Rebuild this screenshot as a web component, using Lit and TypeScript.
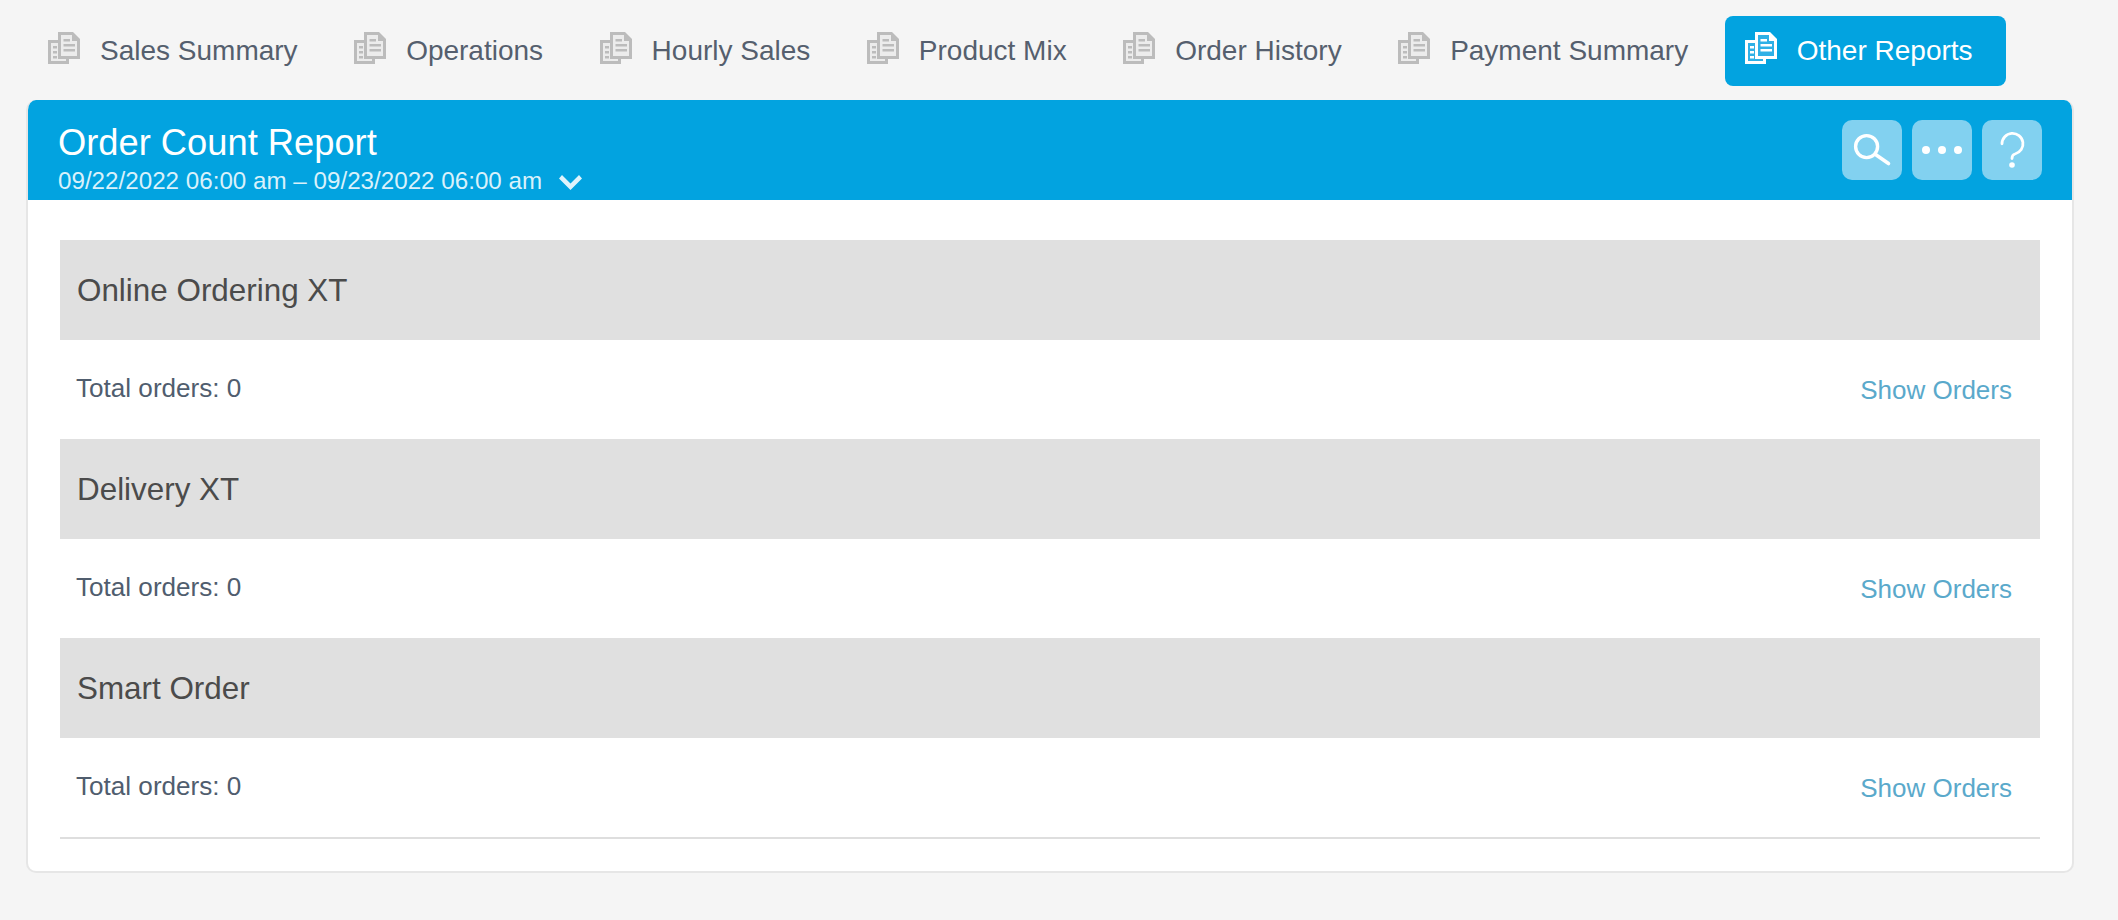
import { LitElement, html, css, svg } from "lit";
import { customElement } from "lit/decorators.js";

const tabs = ["Sales Summary", "Operations", "Hourly Sales", "Product Mix", "Order History", "Payment Summary", "Other Reports"];
const sections = ["Online Ordering XT", "Delivery XT", "Smart Order"];

const docIcon = html`<svg class="doc" viewBox="0 0 32 32" width="32" height="32" aria-hidden="true">
  ${svg`<path class="o" d="M0 8H21V32H0Z"/>
  <path class="i" d="M3 11H18V29H3Z"/>
  <path class="o" d="M5 14H9V16.5H5ZM5 19H9V21.5H5ZM5 24H9V26.5H5Z"/>
  <path class="o" d="M10 0H25L32 7V27H10Z"/>
  <path class="i" d="M13 3H24V9H29V24H13Z"/>
  <path class="o" d="M15.5 7H22V9.5H15.5ZM15.5 12H27V14.5H15.5ZM15.5 17H27V19.5H15.5Z"/>`}
</svg>`;

@customElement("app-root")
export class AppRoot extends LitElement {
  static styles = css`
    :host { display: block; min-height: 920px; background: #f5f5f5; font-family: "Liberation Sans", Arial, sans-serif; box-sizing: border-box; padding: 16px 44px 0 26px; }
    .tabs { display: flex; gap: 3.5px; height: 70px; padding-left: 2px; margin-bottom: 14px; }
    .tab { display: flex; align-items: center; gap: 20px; padding: 0 33px 0 20px; font-size: 28px; color: #555f6e; border-radius: 8px; --o: #bcbcbc; --i: #ececec; }
    .tab.active { background: #02a3e0; color: #fff; --o: #fff; --i: #2fb0e6; }
    .doc { flex: none; margin-top: -6px; filter: blur(0.4px); }
    .doc .o { fill: var(--o); }
    .doc .i { fill: var(--i); }
    .panel { border: 2px solid #e6e6e6; border-top: 0; border-radius: 10px; background: #fff; padding-bottom: 32px; overflow: hidden; }
    .head { display: flex; justify-content: space-between; height: 100px; box-sizing: border-box; background: #02a3e0; padding: 20px 30px; color: #fff; }
    .info { margin-top: 3px; }
    .title { font-size: 36.3px; line-height: 40px; }
    .date { display: flex; align-items: center; font-size: 24.2px; line-height: 28px; color: #d9f1fb; margin-top: 4px; }
    .chev { margin-left: 17px; margin-top: 3px; }
    .btns { display: flex; gap: 10px; }
    .btn { width: 60px; height: 60px; border-radius: 10px; background: #82d1f0; display: block; }
    .sections { padding: 40px 32px 0; }
    .sec { height: 100px; display: flex; align-items: center; background: #e0e0e0; padding: 2px 0 0 17px; box-sizing: border-box; font-size: 31.4px; color: #4b4b4b; }
    .row { height: 99px; display: flex; align-items: center; justify-content: space-between; padding: 0 28px 0 16px; }
    .total { font-size: 26.1px; color: #505d6e; margin-top: -3px; }
    .show { font-size: 26px; color: #5aa9cb; margin-top: 1px; }
    .rule { height: 2px; background: #dedede; }
  `;

  render() {
    return html`
      <div class="tabs">
        ${tabs.map((t) => html`<div class="tab ${t === "Other Reports" ? "active" : ""}">${docIcon}<span>${t}</span></div>`)}
      </div>
      <div class="panel">
        <div class="head">
          <div class="info">
            <div class="title">Order Count Report</div>
            <div class="date">09/22/2022 06:00 am – 09/23/2022 06:00 am
              <svg class="chev" width="23" height="15" viewBox="0 0 23 15" aria-hidden="true"><path d="M0 3.5L3 0L11.5 8.5L20 0L23 3.5L11.5 15Z" fill="#dff3fc"/></svg>
            </div>
          </div>
          <div class="btns">
            <svg class="btn" viewBox="0 0 60 60" aria-hidden="true"><circle cx="24.6" cy="26.6" r="11" fill="none" stroke="#fff" stroke-width="3.4"/><path d="M33.5 34.5L46.5 43.5" fill="none" stroke="#fff" stroke-width="3.6" stroke-linecap="round"/></svg>
            <svg class="btn" viewBox="0 0 60 60" aria-hidden="true"><circle cx="14" cy="30" r="4" fill="#fff"/><circle cx="30" cy="30" r="4" fill="#fff"/><circle cx="46" cy="30" r="4" fill="#fff"/></svg>
            <svg class="btn" viewBox="0 0 60 60" aria-hidden="true"><path d="M20 23.8A10.5 10.5 0 1 1 33 34Q30 34.8 30 38.5" fill="none" stroke="#fff" stroke-width="2.8" stroke-linecap="round"/><circle cx="30" cy="45" r="2.8" fill="#fff"/></svg>
          </div>
        </div>
        <div class="sections">
          ${sections.map((s) => html`
            <div class="sec">${s}</div>
            <div class="row"><span class="total">Total orders: 0</span><span class="show">Show Orders</span></div>`)}
          <div class="rule"></div>
        </div>
      </div>`;
  }
}
